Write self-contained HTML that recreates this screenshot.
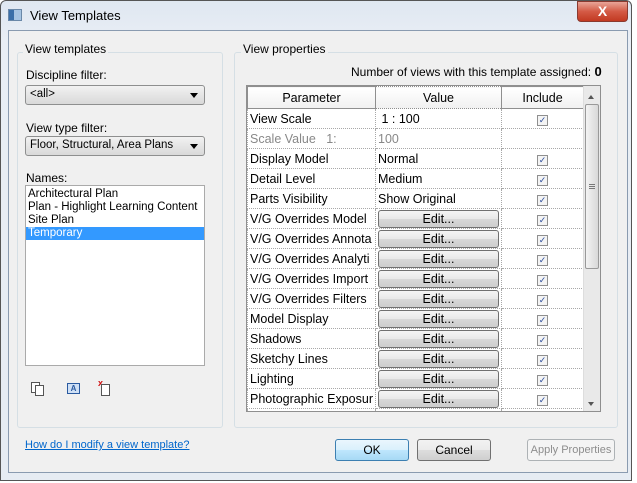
<!DOCTYPE html>
<html><head><style>
*{box-sizing:border-box}
body{margin:0;width:637px;height:483px;background:#fff;font-family:"Liberation Sans",sans-serif;font-size:12px;color:#000;position:relative;overflow:hidden}
.abs{position:absolute}
.frame{left:0;top:0;width:632px;height:481px;background:linear-gradient(#dfe7f1,#e9eef5 40px,#e6ecf3);border:1px solid #555;border-radius:6px 6px 0 0}
.inner{left:8px;top:30px;width:620px;height:443px;background:#f0f0f0;border:1px solid #8a9bb0}
.grp{border:1px solid #d5dfe5;border-radius:3px}
.lbl{background:#f0f0f0;padding:0 2px}
.combo{height:20px;border:1px solid #8e8f8f;border-radius:3px;background:linear-gradient(#f2f2f2,#e5e5e5 50%,#d9d9d9);padding:2px 4px;font-size:11.5px}
.combo:after{content:"";position:absolute;right:6px;top:7px;border:4px solid transparent;border-top:5px solid #000}
.btn{height:22px;border:1px solid #707070;border-radius:3px;background:linear-gradient(#f2f2f2,#ebebeb 50%,#dddddd 51%,#cfcfcf);text-align:center;line-height:20px;white-space:nowrap}
table{border-collapse:collapse;position:absolute;left:247px;top:86px;table-layout:fixed;background:#fff}
td{border:1px dotted #a8a8a8;height:20px;padding:0 2px;font-size:12.5px;white-space:nowrap;overflow:hidden}
th{height:22px;font-weight:normal;font-size:12.5px;background:linear-gradient(#fff,#f0f0f0);border:1px solid #8f8f8f}
.cb{display:inline-block;width:11px;height:11px;border:1px solid #8f8f8f;background:#f4f4f4;color:#2a4a9a;font-size:9px;line-height:9px;text-align:center}
.edit{display:block;height:18px;border:1px solid #707070;border-radius:3px;background:linear-gradient(#f5f5f5,#e8e8e8 50%,#d8d8d8 51%,#cdcdcd);text-align:center;line-height:16px}
</style></head><body>
<div class="abs frame"></div>
<div class="abs" style="left:8px;top:9px;width:14px;height:12px;background:linear-gradient(90deg,#3b6fa8 40%,#a6c4e2 40%);border:1px solid #6a88a8"></div>
<div class="abs" style="left:30px;top:8px;font-size:13px">View Templates</div>
<div class="abs" style="left:577px;top:1px;width:51px;height:21px;background:linear-gradient(#e8a598,#d45a45 50%,#c23a22);border:1px solid #8a3a30;border-radius:0 0 4px 4px;color:#fff;font-weight:bold;text-align:center;line-height:19px;font-size:14px">X</div>
<div class="abs inner"></div>

<div class="abs grp" style="left:17px;top:52px;width:206px;height:376px"></div>
<div class="abs lbl" style="left:23px;top:42px">View templates</div>
<div class="abs" style="left:26px;top:68px">Discipline filter:</div>
<div class="abs combo" style="left:25px;top:85px;width:180px">&lt;all&gt;</div>
<div class="abs" style="left:26px;top:121px">View type filter:</div>
<div class="abs combo" style="left:25px;top:136px;width:180px">Floor, Structural, Area Plans</div>
<div class="abs" style="left:26px;top:171px">Names:</div>
<div class="abs" style="left:25px;top:185px;width:180px;height:181px;background:#fff;border:1px solid #aaa;font-size:11.5px;line-height:13px;padding-top:2px">
<div style="padding-left:2px">Architectural Plan</div>
<div style="padding-left:2px">Plan - Highlight Learning Content</div>
<div style="padding-left:2px">Site Plan</div>
<div style="padding-left:2px;background:#3399ff;color:#fff">Temporary</div>
</div>
<div class="abs" style="left:31px;top:382px;width:9px;height:11px;border:1px solid #555;background:#fff"></div>
<div class="abs" style="left:35px;top:385px;width:9px;height:11px;border:1px solid #555;background:#fff"></div>
<div class="abs" style="left:67px;top:383px;width:13px;height:11px;border:1px solid #2a5aa0;background:#cfe0f5;font-size:8px;color:#2a5aa0;text-align:center;line-height:9px;font-weight:bold">A</div>
<div class="abs" style="left:98px;top:378px;color:#d01010;font-size:9px;font-weight:bold">x</div>
<div class="abs" style="left:101px;top:384px;width:9px;height:12px;border:1px solid #555;background:#fff"></div>

<div class="abs grp" style="left:234px;top:52px;width:384px;height:376px"></div>
<div class="abs lbl" style="left:241px;top:42px">View properties</div>
<div class="abs" style="left:351px;top:64px">Number of views with this template assigned: <b style="font-size:13px">0</b></div>

<div class="abs" style="left:246px;top:85px;width:355px;height:327px;border:1px solid #8f8f8f;background:#fff;overflow:hidden">
<table style="left:0;top:0">
<colgroup><col style="width:127px"><col style="width:126px"><col style="width:82px"></colgroup>
<tr><th>Parameter</th><th style="border-style:dotted">Value</th><th>Include</th></tr>
<tr><td>View Scale</td><td>&nbsp;1 : 100</td><td style="text-align:center"><span class="cb">✓</span></td></tr>
<tr style="color:#888"><td>Scale Value &nbsp;&nbsp;1:</td><td>100</td><td></td></tr>
<tr><td>Display Model</td><td>Normal</td><td style="text-align:center"><span class="cb">✓</span></td></tr>
<tr><td>Detail Level</td><td>Medium</td><td style="text-align:center"><span class="cb">✓</span></td></tr>
<tr><td>Parts Visibility</td><td>Show Original</td><td style="text-align:center"><span class="cb">✓</span></td></tr>
<tr><td>V/G Overrides Model</td><td><span class="edit">Edit...</span></td><td style="text-align:center"><span class="cb">✓</span></td></tr>
<tr><td>V/G Overrides Annota</td><td><span class="edit">Edit...</span></td><td style="text-align:center"><span class="cb">✓</span></td></tr>
<tr><td>V/G Overrides Analyti</td><td><span class="edit">Edit...</span></td><td style="text-align:center"><span class="cb">✓</span></td></tr>
<tr><td>V/G Overrides Import</td><td><span class="edit">Edit...</span></td><td style="text-align:center"><span class="cb">✓</span></td></tr>
<tr><td>V/G Overrides Filters</td><td><span class="edit">Edit...</span></td><td style="text-align:center"><span class="cb">✓</span></td></tr>
<tr><td>Model Display</td><td><span class="edit">Edit...</span></td><td style="text-align:center"><span class="cb">✓</span></td></tr>
<tr><td>Shadows</td><td><span class="edit">Edit...</span></td><td style="text-align:center"><span class="cb">✓</span></td></tr>
<tr><td>Sketchy Lines</td><td><span class="edit">Edit...</span></td><td style="text-align:center"><span class="cb">✓</span></td></tr>
<tr><td>Lighting</td><td><span class="edit">Edit...</span></td><td style="text-align:center"><span class="cb">✓</span></td></tr>
<tr><td>Photographic Exposur</td><td><span class="edit">Edit...</span></td><td style="text-align:center"><span class="cb">✓</span></td></tr>
<tr><td>Underlay Orientation</td><td>Look down</td><td style="text-align:center"><span class="cb">✓</span></td></tr>
</table>
<div class="abs" style="left:336px;top:0;width:18px;height:327px;background:#e9e9e9;border-left:1px solid #ddd"></div>
<div class="abs" style="left:341px;top:6px;border:3px solid transparent;border-bottom:4px solid #555"></div>
<div class="abs" style="left:338px;top:18px;width:14px;height:165px;border:1px solid #999;border-radius:2px;background:linear-gradient(90deg,#f3f3f3,#d8d8d8)"></div>
<div class="abs" style="left:342px;top:98px;width:6px;height:5px;border-top:1px solid #777;border-bottom:1px solid #777"></div>
<div class="abs" style="left:342px;top:100px;width:6px;height:1px;background:#777"></div>
<div class="abs" style="left:341px;top:316px;border:3px solid transparent;border-top:4px solid #555"></div>
</div>

<div class="abs" style="left:25px;top:439px;color:#0066cc;text-decoration:underline;font-size:11px">How do I modify a view template?</div>
<div class="abs btn" style="left:335px;top:439px;width:74px;border-color:#3c7fb1;background:linear-gradient(#eaf6fd,#d9f0fc 50%,#bee6fd 51%,#a7d9f5)">OK</div>
<div class="abs btn" style="left:417px;top:439px;width:74px">Cancel</div>
<div class="abs btn" style="left:527px;top:439px;width:88px;color:#8d8d8d;border-color:#adb2b5;background:#f4f4f4;font-size:11px">Apply Properties</div>
</body></html>
